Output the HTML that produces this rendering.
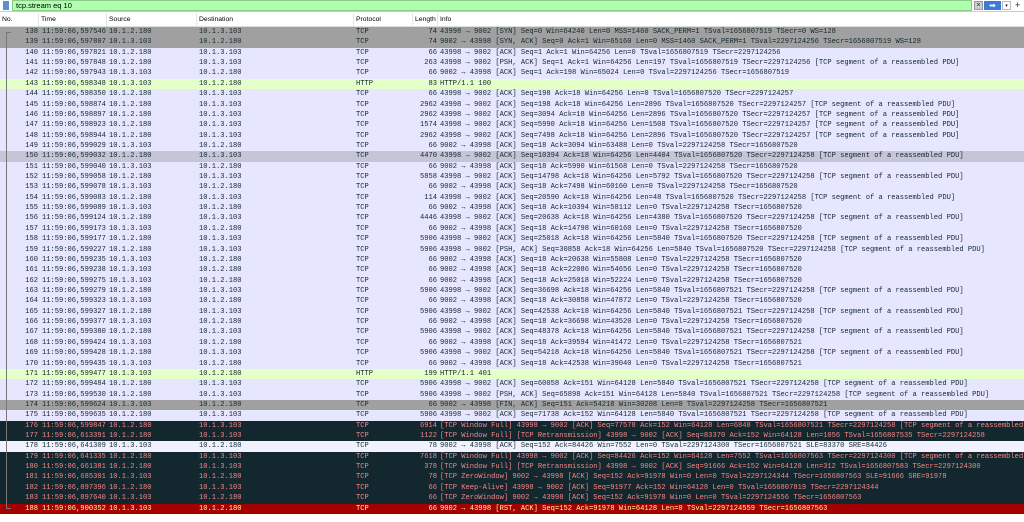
<!DOCTYPE html>
<html><head><meta charset="utf-8"><style>
*{margin:0;padding:0;box-sizing:border-box}
body{width:1024px;height:522px;background:#fff;overflow:hidden;position:relative;font-family:"Liberation Mono",monospace;font-size:7.1px;color:#12272e}
#fb{position:absolute;left:0;top:0;width:1024px;height:12px;background:#fff;border-bottom:1px solid #ccc}
#fbin{position:absolute;left:12px;top:0;width:960px;height:11px;background:#afffaf;border:1px solid #8c8;font-family:"Liberation Sans",sans-serif;font-size:7.5px;line-height:9px;padding-left:3px;color:#000}
#hd{position:absolute;left:0;top:13px;width:1024px;height:14px;background:#fff;font-family:"Liberation Sans",sans-serif;font-size:6.8px;line-height:14px;color:#000;border-bottom:1px solid #ddd}
#hd span{position:absolute;top:0;border-left:1px solid #e4e4e4;padding-left:2px;height:14px}
.r{position:absolute;left:0;width:1024px;height:10.36px;line-height:10.36px;white-space:pre;background:#e7e6ff}
.r span{position:absolute;top:0}
.a{left:0;width:38px;text-align:right}
.b{left:42px}.c{left:109px}.d{left:199px}.e{left:356px}
.f{left:390px;width:47px;text-align:right}
.g{left:440px}
.h{background:#e4ffc7}
.s{background:#a0a0a0}
.m{background:#c6c5d6}
.k{background:#12272e;color:#f78787}
.w{background:#f2f2ff}
.x{background:#a40000;color:#fffc9c}
</style></head><body>
<div id="fb">
<div style="position:absolute;left:3px;top:1px;width:6px;height:9px;background:#5a8fd0"></div>
<div id="fbin">tcp.stream eq 10</div>
<div style="position:absolute;left:974px;top:1px;width:9px;height:9px;background:#ccc;border:1px solid #999;font:7px 'Liberation Sans';line-height:7px;text-align:center">×</div>
<div style="position:absolute;left:984px;top:1px;width:17px;height:9px;background:#3b7ad8;color:#fff;font:8px 'Liberation Sans';line-height:9px;text-align:center">➡</div>
<div style="position:absolute;left:1002px;top:1px;width:9px;height:9px;background:#fff;border:1px solid #bbb;font:5px 'Liberation Sans';line-height:8px;text-align:center">▾</div>
<div style="position:absolute;left:1015px;top:0px;font:9px 'Liberation Sans';line-height:11px">+</div>
</div>
<div id="hd"><span style="left:0;border:0">No.</span><span style="left:38px">Time</span><span style="left:106px">Source</span><span style="left:196px">Destination</span><span style="left:353px">Protocol</span><span style="left:412px">Length</span><span style="left:437px">Info</span></div>

<div class="r s" style="top:27px"><span class="a">138</span><span class="b">11:59:06,597546</span><span class="c">10.1.2.180</span><span class="d">10.1.3.103</span><span class="e">TCP</span><span class="f">74</span><span class="g">43998 → 9002 [SYN] Seq=0 Win=64240 Len=0 MSS=1460 SACK_PERM=1 TSval=1656807519 TSecr=0 WS=128</span></div>
<div class="r s" style="top:37.36px"><span class="a">139</span><span class="b">11:59:06,597807</span><span class="c">10.1.3.103</span><span class="d">10.1.2.180</span><span class="e">TCP</span><span class="f">74</span><span class="g">9002 → 43998 [SYN, ACK] Seq=0 Ack=1 Win=65160 Len=0 MSS=1460 SACK_PERM=1 TSval=2297124256 TSecr=1656807519 WS=128</span></div>
<div class="r" style="top:47.72px"><span class="a">140</span><span class="b">11:59:06,597821</span><span class="c">10.1.2.180</span><span class="d">10.1.3.103</span><span class="e">TCP</span><span class="f">66</span><span class="g">43998 → 9002 [ACK] Seq=1 Ack=1 Win=64256 Len=0 TSval=1656807519 TSecr=2297124256</span></div>
<div class="r" style="top:58.08px"><span class="a">141</span><span class="b">11:59:06,597848</span><span class="c">10.1.2.180</span><span class="d">10.1.3.103</span><span class="e">TCP</span><span class="f">263</span><span class="g">43998 → 9002 [PSH, ACK] Seq=1 Ack=1 Win=64256 Len=197 TSval=1656807519 TSecr=2297124256 [TCP segment of a reassembled PDU]</span></div>
<div class="r" style="top:68.44px"><span class="a">142</span><span class="b">11:59:06,597943</span><span class="c">10.1.3.103</span><span class="d">10.1.2.180</span><span class="e">TCP</span><span class="f">66</span><span class="g">9002 → 43998 [ACK] Seq=1 Ack=198 Win=65024 Len=0 TSval=2297124256 TSecr=1656807519</span></div>
<div class="r h" style="top:78.8px"><span class="a">143</span><span class="b">11:59:06,598348</span><span class="c">10.1.3.103</span><span class="d">10.1.2.180</span><span class="e">HTTP</span><span class="f">83</span><span class="g">HTTP/1.1 100</span></div>
<div class="r" style="top:89.16px"><span class="a">144</span><span class="b">11:59:06,598350</span><span class="c">10.1.2.180</span><span class="d">10.1.3.103</span><span class="e">TCP</span><span class="f">66</span><span class="g">43998 → 9002 [ACK] Seq=198 Ack=18 Win=64256 Len=0 TSval=1656807520 TSecr=2297124257</span></div>
<div class="r" style="top:99.52px"><span class="a">145</span><span class="b">11:59:06,598874</span><span class="c">10.1.2.180</span><span class="d">10.1.3.103</span><span class="e">TCP</span><span class="f">2962</span><span class="g">43998 → 9002 [ACK] Seq=198 Ack=18 Win=64256 Len=2896 TSval=1656807520 TSecr=2297124257 [TCP segment of a reassembled PDU]</span></div>
<div class="r" style="top:109.88px"><span class="a">146</span><span class="b">11:59:06,598897</span><span class="c">10.1.2.180</span><span class="d">10.1.3.103</span><span class="e">TCP</span><span class="f">2962</span><span class="g">43998 → 9002 [ACK] Seq=3094 Ack=18 Win=64256 Len=2896 TSval=1656807520 TSecr=2297124257 [TCP segment of a reassembled PDU]</span></div>
<div class="r" style="top:120.24px"><span class="a">147</span><span class="b">11:59:06,598923</span><span class="c">10.1.2.180</span><span class="d">10.1.3.103</span><span class="e">TCP</span><span class="f">1574</span><span class="g">43998 → 9002 [ACK] Seq=5990 Ack=18 Win=64256 Len=1508 TSval=1656807520 TSecr=2297124257 [TCP segment of a reassembled PDU]</span></div>
<div class="r" style="top:130.6px"><span class="a">148</span><span class="b">11:59:06,598944</span><span class="c">10.1.2.180</span><span class="d">10.1.3.103</span><span class="e">TCP</span><span class="f">2962</span><span class="g">43998 → 9002 [ACK] Seq=7498 Ack=18 Win=64256 Len=2896 TSval=1656807520 TSecr=2297124257 [TCP segment of a reassembled PDU]</span></div>
<div class="r" style="top:140.96px"><span class="a">149</span><span class="b">11:59:06,599029</span><span class="c">10.1.3.103</span><span class="d">10.1.2.180</span><span class="e">TCP</span><span class="f">66</span><span class="g">9002 → 43998 [ACK] Seq=18 Ack=3094 Win=63488 Len=0 TSval=2297124258 TSecr=1656807520</span></div>
<div class="r m" style="top:151.32px"><span class="a">150</span><span class="b">11:59:06,599032</span><span class="c">10.1.2.180</span><span class="d">10.1.3.103</span><span class="e">TCP</span><span class="f">4470</span><span class="g">43998 → 9002 [ACK] Seq=10394 Ack=18 Win=64256 Len=4404 TSval=1656807520 TSecr=2297124258 [TCP segment of a reassembled PDU]</span></div>
<div class="r" style="top:161.68px"><span class="a">151</span><span class="b">11:59:06,599040</span><span class="c">10.1.3.103</span><span class="d">10.1.2.180</span><span class="e">TCP</span><span class="f">66</span><span class="g">9002 → 43998 [ACK] Seq=18 Ack=5990 Win=61568 Len=0 TSval=2297124258 TSecr=1656807520</span></div>
<div class="r" style="top:172.04px"><span class="a">152</span><span class="b">11:59:06,599058</span><span class="c">10.1.2.180</span><span class="d">10.1.3.103</span><span class="e">TCP</span><span class="f">5858</span><span class="g">43998 → 9002 [ACK] Seq=14798 Ack=18 Win=64256 Len=5792 TSval=1656807520 TSecr=2297124258 [TCP segment of a reassembled PDU]</span></div>
<div class="r" style="top:182.4px"><span class="a">153</span><span class="b">11:59:06,599078</span><span class="c">10.1.3.103</span><span class="d">10.1.2.180</span><span class="e">TCP</span><span class="f">66</span><span class="g">9002 → 43998 [ACK] Seq=18 Ack=7498 Win=60160 Len=0 TSval=2297124258 TSecr=1656807520</span></div>
<div class="r" style="top:192.76px"><span class="a">154</span><span class="b">11:59:06,599083</span><span class="c">10.1.2.180</span><span class="d">10.1.3.103</span><span class="e">TCP</span><span class="f">114</span><span class="g">43998 → 9002 [ACK] Seq=20590 Ack=18 Win=64256 Len=48 TSval=1656807520 TSecr=2297124258 [TCP segment of a reassembled PDU]</span></div>
<div class="r" style="top:203.12px"><span class="a">155</span><span class="b">11:59:06,599089</span><span class="c">10.1.3.103</span><span class="d">10.1.2.180</span><span class="e">TCP</span><span class="f">66</span><span class="g">9002 → 43998 [ACK] Seq=18 Ack=10394 Win=58112 Len=0 TSval=2297124258 TSecr=1656807520</span></div>
<div class="r" style="top:213.48px"><span class="a">156</span><span class="b">11:59:06,599124</span><span class="c">10.1.2.180</span><span class="d">10.1.3.103</span><span class="e">TCP</span><span class="f">4446</span><span class="g">43998 → 9002 [ACK] Seq=20638 Ack=18 Win=64256 Len=4380 TSval=1656807520 TSecr=2297124258 [TCP segment of a reassembled PDU]</span></div>
<div class="r" style="top:223.84px"><span class="a">157</span><span class="b">11:59:06,599173</span><span class="c">10.1.3.103</span><span class="d">10.1.2.180</span><span class="e">TCP</span><span class="f">66</span><span class="g">9002 → 43998 [ACK] Seq=18 Ack=14798 Win=60160 Len=0 TSval=2297124258 TSecr=1656807520</span></div>
<div class="r" style="top:234.2px"><span class="a">158</span><span class="b">11:59:06,599177</span><span class="c">10.1.2.180</span><span class="d">10.1.3.103</span><span class="e">TCP</span><span class="f">5906</span><span class="g">43998 → 9002 [ACK] Seq=25018 Ack=18 Win=64256 Len=5840 TSval=1656807520 TSecr=2297124258 [TCP segment of a reassembled PDU]</span></div>
<div class="r" style="top:244.56px"><span class="a">159</span><span class="b">11:59:06,599227</span><span class="c">10.1.2.180</span><span class="d">10.1.3.103</span><span class="e">TCP</span><span class="f">5906</span><span class="g">43998 → 9002 [PSH, ACK] Seq=30858 Ack=18 Win=64256 Len=5840 TSval=1656807520 TSecr=2297124258 [TCP segment of a reassembled PDU]</span></div>
<div class="r" style="top:254.92px"><span class="a">160</span><span class="b">11:59:06,599235</span><span class="c">10.1.3.103</span><span class="d">10.1.2.180</span><span class="e">TCP</span><span class="f">66</span><span class="g">9002 → 43998 [ACK] Seq=18 Ack=20638 Win=55808 Len=0 TSval=2297124258 TSecr=1656807520</span></div>
<div class="r" style="top:265.28px"><span class="a">161</span><span class="b">11:59:06,599238</span><span class="c">10.1.3.103</span><span class="d">10.1.2.180</span><span class="e">TCP</span><span class="f">66</span><span class="g">9002 → 43998 [ACK] Seq=18 Ack=22086 Win=54656 Len=0 TSval=2297124258 TSecr=1656807520</span></div>
<div class="r" style="top:275.64px"><span class="a">162</span><span class="b">11:59:06,599275</span><span class="c">10.1.3.103</span><span class="d">10.1.2.180</span><span class="e">TCP</span><span class="f">66</span><span class="g">9002 → 43998 [ACK] Seq=18 Ack=25018 Win=52224 Len=0 TSval=2297124258 TSecr=1656807520</span></div>
<div class="r" style="top:286px"><span class="a">163</span><span class="b">11:59:06,599279</span><span class="c">10.1.2.180</span><span class="d">10.1.3.103</span><span class="e">TCP</span><span class="f">5906</span><span class="g">43998 → 9002 [ACK] Seq=36698 Ack=18 Win=64256 Len=5840 TSval=1656807521 TSecr=2297124258 [TCP segment of a reassembled PDU]</span></div>
<div class="r" style="top:296.36px"><span class="a">164</span><span class="b">11:59:06,599323</span><span class="c">10.1.3.103</span><span class="d">10.1.2.180</span><span class="e">TCP</span><span class="f">66</span><span class="g">9002 → 43998 [ACK] Seq=18 Ack=30858 Win=47872 Len=0 TSval=2297124258 TSecr=1656807520</span></div>
<div class="r" style="top:306.72px"><span class="a">165</span><span class="b">11:59:06,599327</span><span class="c">10.1.2.180</span><span class="d">10.1.3.103</span><span class="e">TCP</span><span class="f">5906</span><span class="g">43998 → 9002 [ACK] Seq=42538 Ack=18 Win=64256 Len=5840 TSval=1656807521 TSecr=2297124258 [TCP segment of a reassembled PDU]</span></div>
<div class="r" style="top:317.08px"><span class="a">166</span><span class="b">11:59:06,599377</span><span class="c">10.1.3.103</span><span class="d">10.1.2.180</span><span class="e">TCP</span><span class="f">66</span><span class="g">9002 → 43998 [ACK] Seq=18 Ack=36698 Win=43520 Len=0 TSval=2297124258 TSecr=1656807520</span></div>
<div class="r" style="top:327.44px"><span class="a">167</span><span class="b">11:59:06,599380</span><span class="c">10.1.2.180</span><span class="d">10.1.3.103</span><span class="e">TCP</span><span class="f">5906</span><span class="g">43998 → 9002 [ACK] Seq=48378 Ack=18 Win=64256 Len=5840 TSval=1656807521 TSecr=2297124258 [TCP segment of a reassembled PDU]</span></div>
<div class="r" style="top:337.8px"><span class="a">168</span><span class="b">11:59:06,599424</span><span class="c">10.1.3.103</span><span class="d">10.1.2.180</span><span class="e">TCP</span><span class="f">66</span><span class="g">9002 → 43998 [ACK] Seq=18 Ack=39594 Win=41472 Len=0 TSval=2297124258 TSecr=1656807521</span></div>
<div class="r" style="top:348.16px"><span class="a">169</span><span class="b">11:59:06,599428</span><span class="c">10.1.2.180</span><span class="d">10.1.3.103</span><span class="e">TCP</span><span class="f">5906</span><span class="g">43998 → 9002 [ACK] Seq=54218 Ack=18 Win=64256 Len=5840 TSval=1656807521 TSecr=2297124258 [TCP segment of a reassembled PDU]</span></div>
<div class="r" style="top:358.52px"><span class="a">170</span><span class="b">11:59:06,599435</span><span class="c">10.1.3.103</span><span class="d">10.1.2.180</span><span class="e">TCP</span><span class="f">66</span><span class="g">9002 → 43998 [ACK] Seq=18 Ack=42538 Win=39040 Len=0 TSval=2297124258 TSecr=1656807521</span></div>
<div class="r h" style="top:368.88px"><span class="a">171</span><span class="b">11:59:06,599477</span><span class="c">10.1.3.103</span><span class="d">10.1.2.180</span><span class="e">HTTP</span><span class="f">199</span><span class="g">HTTP/1.1 401</span></div>
<div class="r" style="top:379.24px"><span class="a">172</span><span class="b">11:59:06,599484</span><span class="c">10.1.2.180</span><span class="d">10.1.3.103</span><span class="e">TCP</span><span class="f">5906</span><span class="g">43998 → 9002 [ACK] Seq=60058 Ack=151 Win=64128 Len=5840 TSval=1656807521 TSecr=2297124258 [TCP segment of a reassembled PDU]</span></div>
<div class="r" style="top:389.6px"><span class="a">173</span><span class="b">11:59:06,599530</span><span class="c">10.1.2.180</span><span class="d">10.1.3.103</span><span class="e">TCP</span><span class="f">5906</span><span class="g">43998 → 9002 [PSH, ACK] Seq=65898 Ack=151 Win=64128 Len=5840 TSval=1656807521 TSecr=2297124258 [TCP segment of a reassembled PDU]</span></div>
<div class="r s" style="top:399.96px"><span class="a">174</span><span class="b">11:59:06,599624</span><span class="c">10.1.3.103</span><span class="d">10.1.2.180</span><span class="e">TCP</span><span class="f">66</span><span class="g">9002 → 43998 [FIN, ACK] Seq=151 Ack=54218 Win=30208 Len=0 TSval=2297124258 TSecr=1656807521</span></div>
<div class="r" style="top:410.32px"><span class="a">175</span><span class="b">11:59:06,599635</span><span class="c">10.1.2.180</span><span class="d">10.1.3.103</span><span class="e">TCP</span><span class="f">5906</span><span class="g">43998 → 9002 [ACK] Seq=71738 Ack=152 Win=64128 Len=5840 TSval=1656807521 TSecr=2297124258 [TCP segment of a reassembled PDU]</span></div>
<div class="r k" style="top:420.68px"><span class="a">176</span><span class="b">11:59:06,599847</span><span class="c">10.1.2.180</span><span class="d">10.1.3.103</span><span class="e">TCP</span><span class="f">6914</span><span class="g">[TCP Window Full] 43998 → 9002 [ACK] Seq=77578 Ack=152 Win=64128 Len=6848 TSval=1656807521 TSecr=2297124258 [TCP segment of a reassembled PDU]</span></div>
<div class="r k" style="top:431.04px"><span class="a">177</span><span class="b">11:59:06,613391</span><span class="c">10.1.2.180</span><span class="d">10.1.3.103</span><span class="e">TCP</span><span class="f">1122</span><span class="g">[TCP Window Full] [TCP Retransmission] 43998 → 9002 [ACK] Seq=83370 Ack=152 Win=64128 Len=1056 TSval=1656807535 TSecr=2297124258</span></div>
<div class="r w" style="top:441.4px"><span class="a">178</span><span class="b">11:59:06,641309</span><span class="c">10.1.3.103</span><span class="d">10.1.2.180</span><span class="e">TCP</span><span class="f">78</span><span class="g">9002 → 43998 [ACK] Seq=152 Ack=84426 Win=7552 Len=0 TSval=2297124300 TSecr=1656807521 SLE=83370 SRE=84426</span></div>
<div class="r k" style="top:451.76px"><span class="a">179</span><span class="b">11:59:06,641335</span><span class="c">10.1.2.180</span><span class="d">10.1.3.103</span><span class="e">TCP</span><span class="f">7618</span><span class="g">[TCP Window Full] 43998 → 9002 [ACK] Seq=84426 Ack=152 Win=64128 Len=7552 TSval=1656807563 TSecr=2297124300 [TCP segment of a reassembled PDU]</span></div>
<div class="r k" style="top:462.12px"><span class="a">180</span><span class="b">11:59:06,661381</span><span class="c">10.1.2.180</span><span class="d">10.1.3.103</span><span class="e">TCP</span><span class="f">378</span><span class="g">[TCP Window Full] [TCP Retransmission] 43998 → 9002 [ACK] Seq=91666 Ack=152 Win=64128 Len=312 TSval=1656807583 TSecr=2297124300</span></div>
<div class="r k" style="top:472.48px"><span class="a">181</span><span class="b">11:59:06,685301</span><span class="c">10.1.3.103</span><span class="d">10.1.2.180</span><span class="e">TCP</span><span class="f">78</span><span class="g">[TCP ZeroWindow] 9002 → 43998 [ACK] Seq=152 Ack=91978 Win=0 Len=0 TSval=2297124344 TSecr=1656807563 SLE=91666 SRE=91978</span></div>
<div class="r k" style="top:482.84px"><span class="a">182</span><span class="b">11:59:06,897396</span><span class="c">10.1.2.180</span><span class="d">10.1.3.103</span><span class="e">TCP</span><span class="f">66</span><span class="g">[TCP Keep-Alive] 43998 → 9002 [ACK] Seq=91977 Ack=152 Win=64128 Len=0 TSval=1656807819 TSecr=2297124344</span></div>
<div class="r k" style="top:493.2px"><span class="a">183</span><span class="b">11:59:06,897640</span><span class="c">10.1.3.103</span><span class="d">10.1.2.180</span><span class="e">TCP</span><span class="f">66</span><span class="g">[TCP ZeroWindow] 9002 → 43998 [ACK] Seq=152 Ack=91978 Win=0 Len=0 TSval=2297124556 TSecr=1656807563</span></div>
<div class="r x" style="top:503.56px"><span class="a">188</span><span class="b">11:59:06,900352</span><span class="c">10.1.3.103</span><span class="d">10.1.2.180</span><span class="e">TCP</span><span class="f">66</span><span class="g">9002 → 43998 [RST, ACK] Seq=152 Ack=91978 Win=64128 Len=0 TSval=2297124559 TSecr=1656807563</span></div>

<div style="position:absolute;left:6px;top:32px;width:1px;height:477px;background:#777"></div>
<div style="position:absolute;left:6px;top:32px;width:5px;height:1px;background:#777"></div>
<div style="position:absolute;left:6px;top:508px;width:5px;height:1px;background:#777"></div>
</body></html>
